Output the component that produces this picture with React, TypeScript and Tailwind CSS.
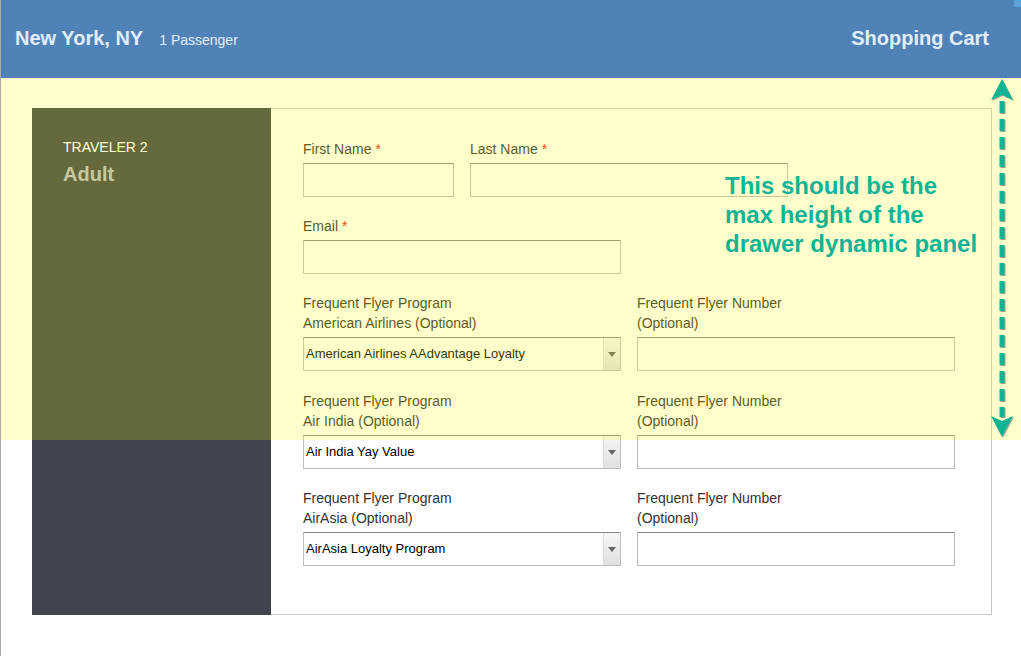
import React from "react";

const inputBox =
  "h-[34px] border border-[#bdbdbd] border-t-[#8a8a8a] bg-white";

function Label({ children, required }: { children: React.ReactNode; required?: boolean }) {
  return (
    <div className="text-[14px] leading-[20px] text-[#333] mb-[4px]">
      {children}
      {required && <span className="text-[#e41b17] ml-[4px]">*</span>}
    </div>
  );
}

function SelectBox({ value }: { value: string }) {
  return (
    <div className={`${inputBox} w-[318px] flex items-stretch`}>
      <div className="flex-1 flex items-center pl-[2px] text-[13px] text-black">{value}</div>
      <div className="w-[17px] border-l border-[#dcdcdc] bg-gradient-to-b from-[#f6f6f6] to-[#e0e0e0] flex items-center justify-center">
        <svg width="8" height="5" viewBox="0 0 8 5">
          <path d="M0 0 H8 L4 5 Z" fill="#666" />
        </svg>
      </div>
    </div>
  );
}

function FlyerRow({ airline, program, top }: { airline: string; program: string; top: string }) {
  return (
    <div className={`flex gap-[16px] ${top}`}>
      <div className="w-[318px]">
        <Label>
          Frequent Flyer Program
          <br />
          {airline} (Optional)
        </Label>
        <SelectBox value={program} />
      </div>
      <div className="w-[318px]">
        <Label>
          Frequent Flyer Number
          <br />
          (Optional)
        </Label>
        <div className={`${inputBox} w-[318px]`} />
      </div>
    </div>
  );
}

function MaxHeightArrow() {
  const cx = 15;
  return (
    <svg
      className="absolute left-[986px] top-[78px] pointer-events-none"
      width="30"
      height="364"
      viewBox="0 0 30 364"
    >
      <line x1={cx + 1} y1="24" x2={cx + 1} y2="340" stroke="#555" strokeOpacity="0.55" strokeWidth="5" strokeDasharray="12 6" />
      <line x1={cx} y1="23" x2={cx} y2="339" stroke="#10b495" strokeWidth="5" strokeDasharray="12 6" />
      <path d={`M${cx + 1} 2 L${cx + 12} 23 L${cx + 1} 18 L${cx - 10} 23 Z`} fill="#555" fillOpacity="0.5" />
      <path d={`M${cx} 1 L${cx + 11} 22 L${cx} 17 L${cx - 11} 22 Z`} fill="#10b495" />
      <path d={`M${cx + 1} 360 L${cx + 12} 339 L${cx + 1} 344 L${cx - 10} 339 Z`} fill="#555" fillOpacity="0.5" />
      <path d={`M${cx} 359 L${cx + 11} 338 L${cx} 343 L${cx - 11} 338 Z`} fill="#10b495" />
    </svg>
  );
}

export default function App() {
  return (
    <div className="relative w-[1021px] h-[656px] overflow-hidden bg-white border-l border-[#aaaaaa] font-['Liberation_Sans',Arial,sans-serif]">
      <header className="h-[78px] bg-[#5082b8] flex items-center justify-between pl-[14px] pr-[32px] pb-[3px]">
        <div className="flex items-baseline gap-[16px] text-[#e1eefa]">
          <span className="text-[20px] font-bold">New York, NY</span>
          <span className="text-[14px]">1 Passenger</span>
        </div>
        <span className="text-[20px] font-bold text-[#e1eefa]">Shopping Cart</span>
      </header>

      <main className="pt-[30px] pl-[31px]">
        <div className="flex w-[960px] h-[507px]">
          <aside className="w-[239px] bg-[#40444c] pl-[31px] pt-[31px]">
            <div className="text-[14px] leading-[16px] text-white">TRAVELER 2</div>
            <div className="text-[20px] leading-[23px] font-bold text-[#babdc6] mt-[8px]">Adult</div>
          </aside>

          <section className="flex-1 border border-l-0 border-[#c8c8c8] pl-[32px] pt-[30px]">
            <div className="flex gap-[16px]">
              <div className="w-[151px]">
                <Label required>First Name</Label>
                <div className={`${inputBox} w-[151px]`} />
              </div>
              <div className="w-[318px]">
                <Label required>Last Name</Label>
                <div className={`${inputBox} w-[318px]`} />
              </div>
            </div>

            <div className="mt-[19px] w-[318px]">
              <Label required>Email</Label>
              <div className={`${inputBox} w-[318px]`} />
            </div>

            <FlyerRow top="mt-[19px]" airline="American Airlines" program="American Airlines AAdvantage Loyalty" />
            <FlyerRow top="mt-[20px]" airline="Air India" program="Air India Yay Value" />
            <FlyerRow top="mt-[19px]" airline="AirAsia" program="AirAsia Loyalty Program" />
          </section>
        </div>
      </main>

      {/* annotation: drawer max height */}
      <div className="absolute left-0 top-[78px] w-full h-[362px] bg-[#ffff00]/20 pointer-events-none" />
      <div className="absolute left-[724px] top-[171px] text-[24px] leading-[29px] font-bold text-[#10b495]">
        This should be the
        <br />
        max height of the
        <br />
        drawer dynamic panel
      </div>
      <MaxHeightArrow />

      <div className="absolute right-0 top-0 w-[7px] h-[7px] border border-[#49a6e8] bg-[#6a9fd6]" />
    </div>
  );
}
